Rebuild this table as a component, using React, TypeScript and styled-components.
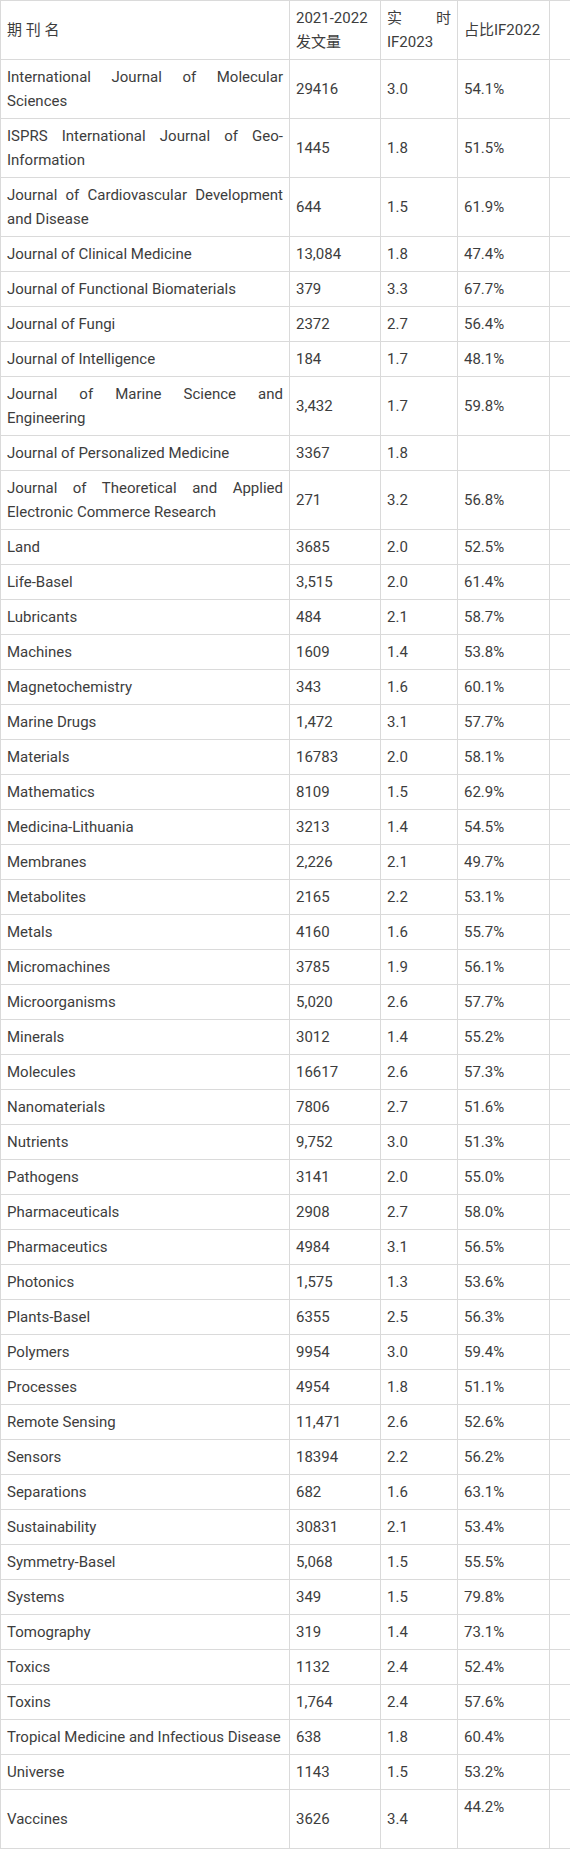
import React from "react";
import styled, { createGlobalStyle } from "styled-components";

const GlobalStyle = createGlobalStyle`
  html, body { margin: 0; padding: 0; background: #ffffff; }
  body { font-family: Roboto, "Noto Sans CJK SC", sans-serif; }
`;

const Viewport = styled.div`
  width: 570px;
  overflow: hidden;
`;

const Table = styled.table`
  border-collapse: collapse;
  table-layout: fixed;
  width: 600px;
  font-family: Roboto, "Noto Sans CJK SC", sans-serif;
  font-size: 15px;
  line-height: 24px;
  color: #3d3d3d;
`;

const Cell = styled.td<{ $top?: boolean }>`
  border: 1px solid #dadada;
  padding: 5px 6px;
  text-align: justify;
  vertical-align: ${(p) => (p.$top ? "top" : "middle")};
  word-break: normal;
`;

const NoWrap = styled.span`
  white-space: nowrap;
`;

const BlankLine = styled.span`
  display: block;
  height: 24px;
`;

type Row = [string, string, string, string];

const rows: Row[] = [
  ["International Journal of Molecular Sciences", "29416", "3.0", "54.1%"],
  ["ISPRS International Journal of Geo-Information", "1445", "1.8", "51.5%"],
  ["Journal of Cardiovascular Development and Disease", "644", "1.5", "61.9%"],
  ["Journal of Clinical Medicine", "13,084", "1.8", "47.4%"],
  ["Journal of Functional Biomaterials", "379", "3.3", "67.7%"],
  ["Journal of Fungi", "2372", "2.7", "56.4%"],
  ["Journal of Intelligence", "184", "1.7", "48.1%"],
  ["Journal of Marine Science and Engineering", "3,432", "1.7", "59.8%"],
  ["Journal of Personalized Medicine", "3367", "1.8", ""],
  ["Journal of Theoretical and Applied Electronic Commerce Research", "271", "3.2", "56.8%"],
  ["Land", "3685", "2.0", "52.5%"],
  ["Life-Basel", "3,515", "2.0", "61.4%"],
  ["Lubricants", "484", "2.1", "58.7%"],
  ["Machines", "1609", "1.4", "53.8%"],
  ["Magnetochemistry", "343", "1.6", "60.1%"],
  ["Marine Drugs", "1,472", "3.1", "57.7%"],
  ["Materials", "16783", "2.0", "58.1%"],
  ["Mathematics", "8109", "1.5", "62.9%"],
  ["Medicina-Lithuania", "3213", "1.4", "54.5%"],
  ["Membranes", "2,226", "2.1", "49.7%"],
  ["Metabolites", "2165", "2.2", "53.1%"],
  ["Metals", "4160", "1.6", "55.7%"],
  ["Micromachines", "3785", "1.9", "56.1%"],
  ["Microorganisms", "5,020", "2.6", "57.7%"],
  ["Minerals", "3012", "1.4", "55.2%"],
  ["Molecules", "16617", "2.6", "57.3%"],
  ["Nanomaterials", "7806", "2.7", "51.6%"],
  ["Nutrients", "9,752", "3.0", "51.3%"],
  ["Pathogens", "3141", "2.0", "55.0%"],
  ["Pharmaceuticals", "2908", "2.7", "58.0%"],
  ["Pharmaceutics", "4984", "3.1", "56.5%"],
  ["Photonics", "1,575", "1.3", "53.6%"],
  ["Plants-Basel", "6355", "2.5", "56.3%"],
  ["Polymers", "9954", "3.0", "59.4%"],
  ["Processes", "4954", "1.8", "51.1%"],
  ["Remote Sensing", "11,471", "2.6", "52.6%"],
  ["Sensors", "18394", "2.2", "56.2%"],
  ["Separations", "682", "1.6", "63.1%"],
  ["Sustainability", "30831", "2.1", "53.4%"],
  ["Symmetry-Basel", "5,068", "1.5", "55.5%"],
  ["Systems", "349", "1.5", "79.8%"],
  ["Tomography", "319", "1.4", "73.1%"],
  ["Toxics", "1132", "2.4", "52.4%"],
  ["Toxins", "1,764", "2.4", "57.6%"],
  ["Tropical Medicine and Infectious Disease", "638", "1.8", "60.4%"],
  ["Universe", "1143", "1.5", "53.2%"],
];

export default function App() {
  return (
    <Viewport>
      <GlobalStyle />
      <Table>
        <colgroup>
          <col style={{ width: 289 }} />
          <col style={{ width: 91 }} />
          <col style={{ width: 77 }} />
          <col style={{ width: 92 }} />
          <col style={{ width: 51 }} />
        </colgroup>
        <tbody>
          <tr>
            <Cell>期 刊 名</Cell>
            <Cell>2021-2022发文量</Cell>
            <Cell>实时IF2023</Cell>
            <Cell>
              <NoWrap>占比IF2022</NoWrap>
            </Cell>
            <Cell />
          </tr>
          {rows.map(([name, count, impact, ratio]) => (
            <tr key={name}>
              <Cell>{name}</Cell>
              <Cell>{count}</Cell>
              <Cell>{impact}</Cell>
              <Cell>{ratio}</Cell>
              <Cell />
            </tr>
          ))}
          <tr>
            <Cell>Vaccines</Cell>
            <Cell>3626</Cell>
            <Cell>3.4</Cell>
            <Cell $top>
              44.2%
              <BlankLine />
            </Cell>
            <Cell />
          </tr>
        </tbody>
      </Table>
    </Viewport>
  );
}
